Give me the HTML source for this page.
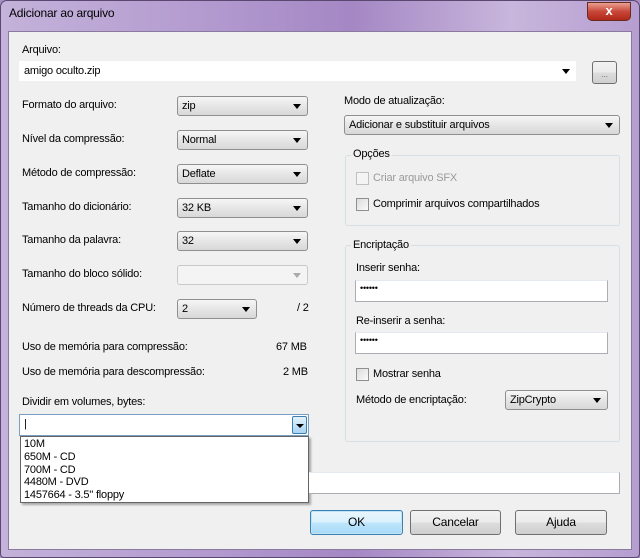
<!DOCTYPE html>
<html><head><meta charset="utf-8"><style>
*{box-sizing:border-box;margin:0;padding:0}
body{width:640px;height:558px;overflow:hidden;background:#a98fc4;font-family:"Liberation Sans",sans-serif;font-size:11px;letter-spacing:-0.2px;color:#000;position:relative}
.frame{position:absolute;left:0;top:0;width:640px;height:558px;background:linear-gradient(90deg,#c4b2da 0%,#b49cd0 30%,#a487c4 55%,#c8b6dc 80%,#b59ed0 100%);border-radius:7px 7px 4px 4px;border:1px solid #5a4870}
.title{position:absolute;left:9px;top:6px;font-size:12px;color:#000}
.close{position:absolute;left:587px;top:2px;width:44px;height:19px;border-radius:0 0 5px 5px;background:linear-gradient(#e8a090,#c8483a 50%,#b02818);border:1px solid #6a2a20;color:#fff;font-weight:bold;font-size:13px;text-align:center;line-height:16px}
.body{position:absolute;left:8px;top:31px;width:624px;height:519px;background:#f0f0f0;border:1px solid #8a7aa0}
.a{position:absolute;white-space:nowrap}
.cb{position:absolute;height:20px;border:1px solid #8e8f8f;border-radius:3px;background:linear-gradient(#f6f6f6,#e6e6e6 50%,#d8d8d8);padding-left:4px;line-height:18px}
.cb:after{content:"";position:absolute;right:6px;top:7px;border-left:4px solid transparent;border-right:4px solid transparent;border-top:5px solid #000}
.cb.dis{background:#f4f4f4;border-color:#c8c8c8}
.cb.dis:after{border-top-color:#aaa}
.ed{position:absolute;height:20px;border:1px solid #abadb3;border-top-color:#e3e9ef;background:#fff;padding-left:4px;line-height:18px}
.grp{position:absolute;border:1px solid #d5dfe5;border-radius:3px}
.gl{position:absolute;background:#f0f0f0;padding:0 2px}
.ck{position:absolute;width:13px;height:13px;border:1px solid #8e8f8f;background:linear-gradient(135deg,#dcdcdc,#fafafa)}
.btn{position:absolute;height:25px;border:1px solid #707070;border-radius:3px;background:linear-gradient(#f2f2f2,#ebebeb 50%,#dddddd 51%,#cfcfcf);text-align:center;line-height:23px;font-size:12px}
</style></head><body>
<div class="frame"></div>
<div class="title">Adicionar ao arquivo</div>
<div class="close">x</div>
<div class="body"></div>

<div class="a" style="left:22px;top:44px">Arquivo:</div>
<div class="ed" style="left:19px;top:61px;width:557px;border-color:#fff;">amigo oculto.zip</div>
<div style="position:absolute;left:562px;top:69px;border-left:4px solid transparent;border-right:4px solid transparent;border-top:5px solid #000"></div>
<div class="btn" style="left:592px;top:61px;width:25px;height:23px;line-height:24px;font-size:9px;color:#777">...</div>

<div class="a" style="left:22px;top:99px">Formato do arquivo:</div>
<div class="cb" style="left:177px;top:96px;width:131px">zip</div>
<div class="a" style="left:22px;top:133px">Nível da compressão:</div>
<div class="cb" style="left:177px;top:130px;width:131px">Normal</div>
<div class="a" style="left:22px;top:167px">Método de compressão:</div>
<div class="cb" style="left:177px;top:164px;width:131px">Deflate</div>
<div class="a" style="left:22px;top:201px">Tamanho do dicionário:</div>
<div class="cb" style="left:177px;top:198px;width:131px">32 KB</div>
<div class="a" style="left:22px;top:234px">Tamanho da palavra:</div>
<div class="cb" style="left:177px;top:231px;width:131px">32</div>
<div class="a" style="left:22px;top:268px">Tamanho do bloco sólido:</div>
<div class="cb dis" style="left:177px;top:265px;width:131px"></div>
<div class="a" style="left:22px;top:302px">Número de threads da CPU:</div>
<div class="cb" style="left:177px;top:299px;width:80px">2</div>
<div class="a" style="left:297px;top:302px">/ 2</div>
<div class="a" style="left:22px;top:341px">Uso de memória para compressão:</div>
<div class="a" style="left:276px;top:341px">67 MB</div>
<div class="a" style="left:22px;top:366px">Uso de memória para descompressão:</div>
<div class="a" style="left:283px;top:366px">2 MB</div>
<div class="a" style="left:22px;top:396px">Dividir em volumes, bytes:</div>
<div class="ed" style="left:19px;top:414px;width:290px;height:22px;border-color:#7a9ec0">|</div>
<div style="position:absolute;left:292px;top:416px;width:15px;height:18px;background:linear-gradient(#e4f2fb,#a8d4f2);border:1px solid #3c7fb1;border-radius:2px"></div>
<div style="position:absolute;left:296px;top:424px;border-left:4px solid transparent;border-right:4px solid transparent;border-top:4px solid #000"></div>
<div style="position:absolute;left:20px;top:436px;width:289px;height:67px;background:#fff;border:1px solid #646464;box-shadow:2px 2px 2px rgba(0,0,0,.3);padding:1px 3px;line-height:12.8px;font-size:11px">10M<br>650M - CD<br>700M - CD<br>4480M - DVD<br>1457664 - 3.5'' floppy</div>
<div class="ed" style="left:309px;top:472px;width:311px;height:22px;border-left:none"></div>

<div class="a" style="left:344px;top:95px">Modo de atualização:</div>
<div class="cb" style="left:344px;top:115px;width:276px">Adicionar e substituir arquivos</div>
<div class="grp" style="left:345px;top:155px;width:275px;height:71px"></div>
<div class="gl a" style="left:351px;top:148px">Opções</div>
<div class="ck" style="left:356px;top:172px;border-color:#c0c0c0;background:#f4f4f4"></div>
<div class="a" style="left:373px;top:172px;color:#9a9a9a">Criar arquivo SFX</div>
<div class="ck" style="left:356px;top:198px"></div>
<div class="a" style="left:373px;top:198px">Comprimir arquivos compartilhados</div>
<div class="grp" style="left:345px;top:245px;width:275px;height:197px"></div>
<div class="gl a" style="left:351px;top:239px">Encriptação</div>
<div class="a" style="left:356px;top:262px">Inserir senha:</div>
<div class="ed" style="left:355px;top:280px;width:253px;height:22px;font-size:9px;line-height:14px">••••••</div>
<div class="a" style="left:356px;top:315px">Re-inserir a senha:</div>
<div class="ed" style="left:355px;top:332px;width:253px;height:22px;font-size:9px;line-height:14px">••••••</div>
<div class="ck" style="left:356px;top:368px"></div>
<div class="a" style="left:373px;top:368px">Mostrar senha</div>
<div class="a" style="left:356px;top:394px">Método de encriptação:</div>
<div class="cb" style="left:505px;top:390px;width:103px">ZipCrypto</div>

<div class="btn" style="left:310px;top:510px;width:93px;border-color:#3c7fb1;box-shadow:inset 0 0 0 1px #bfe4f8;background:linear-gradient(#eaf6fd,#d9f0fc 50%,#bee6fd 51%,#a7d9f5)">OK</div>
<div class="btn" style="left:410px;top:510px;width:91px">Cancelar</div>
<div class="btn" style="left:515px;top:510px;width:92px">Ajuda</div>
</body></html>
